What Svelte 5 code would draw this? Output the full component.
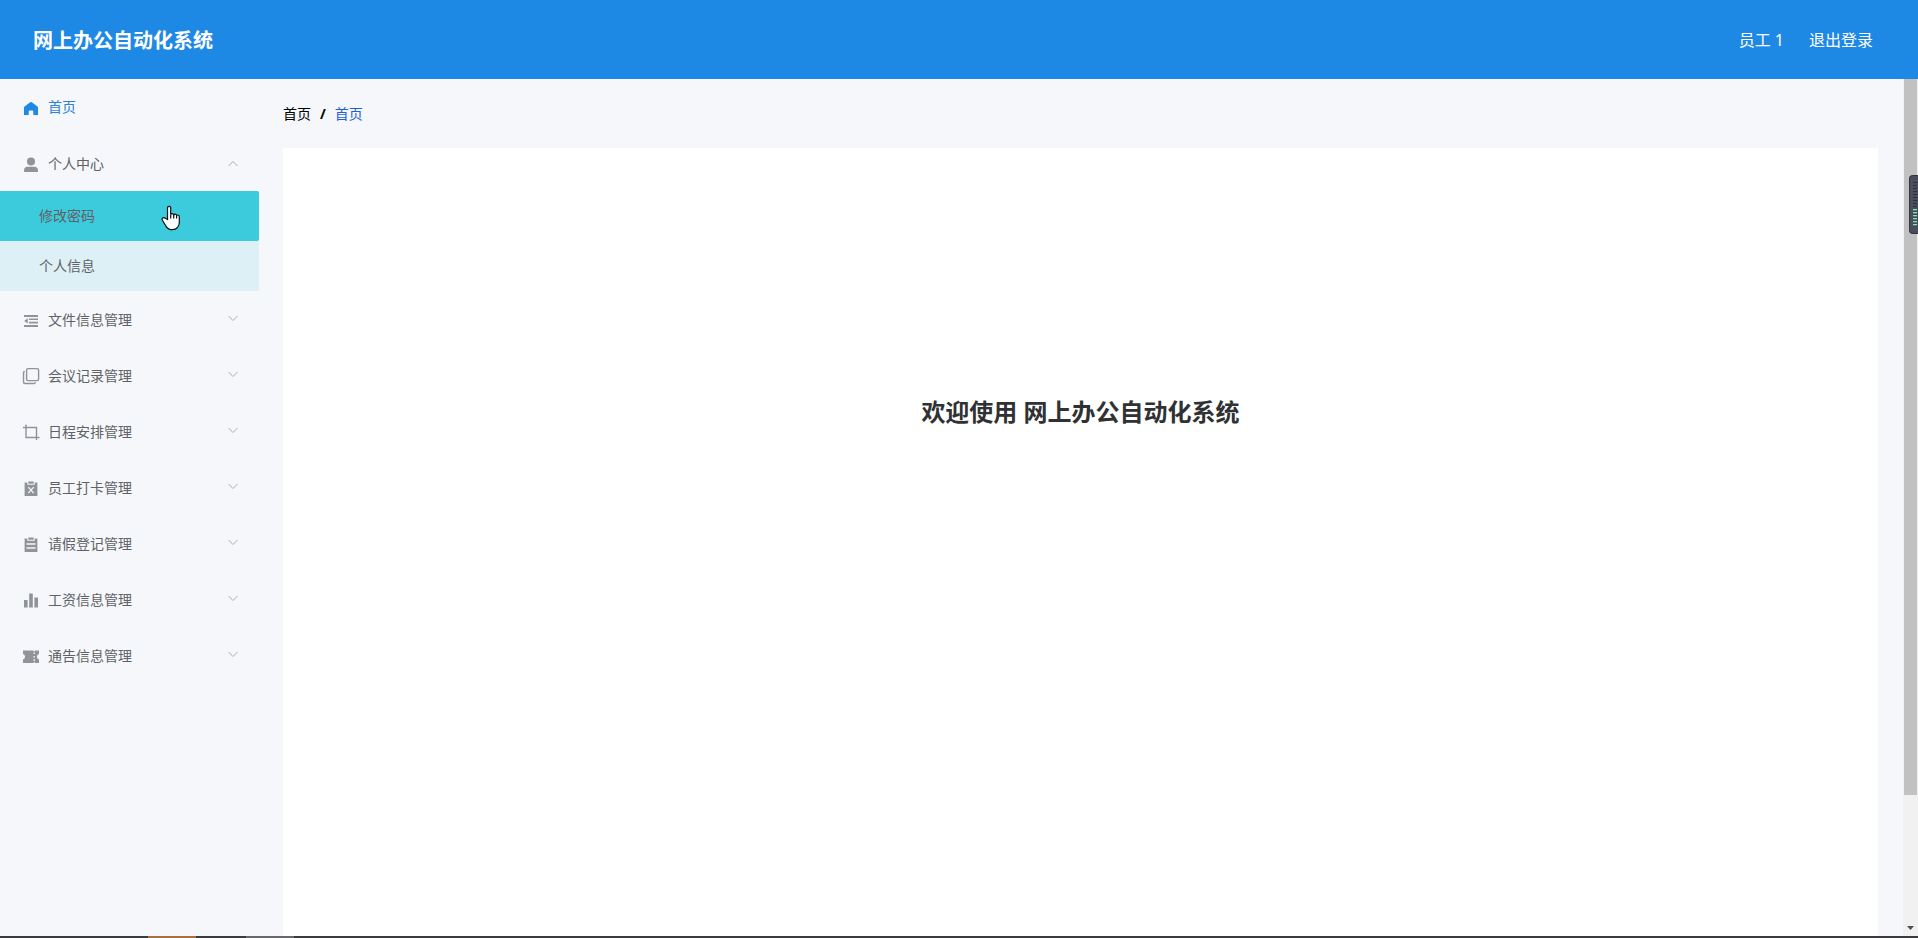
<script>
  const systemName = '网上办公自动化系统';

  let menus = $state([
    {
      name: '个人中心',
      icon: 'user',
      open: true,
      children: ['修改密码', '个人信息']
    },
    { name: '文件信息管理', icon: 'fold', open: false, children: ['文件信息'] },
    { name: '会议记录管理', icon: 'copy', open: false, children: ['会议记录'] },
    { name: '日程安排管理', icon: 'crop', open: false, children: ['日程安排'] },
    { name: '员工打卡管理', icon: 'claim', open: false, children: ['员工打卡'] },
    { name: '请假登记管理', icon: 'order', open: false, children: ['请假登记'] },
    { name: '工资信息管理', icon: 'data', open: false, children: ['工资信息'] },
    { name: '通告信息管理', icon: 'ticket', open: false, children: ['通告信息'] }
  ]);

  let hovered = $state('修改密码');
</script>

{#snippet icon(type)}
  <svg class="icon" viewBox="0 0 18 18" width="18" height="18" aria-hidden="true">
    {#if type === 'home'}
      <path d="M8.2 4.3a1.3 1.3 0 0 1 1.6 0l5.6 4.2q.6.5.6 1.2V17h-4.7v-3.4a1 1 0 0 0-1-1H7.7a1 1 0 0 0-1 1V17H2V9.700q0-.7.6-1.200z" />
    {:else if type === 'user'}
      <circle cx="9" cy="6.500" r="4" />
      <path d="M4.500 11.800h9q2.500.8 2.500 3.400v1q0 .9-.9.900H2.900q-.9 0-.9-.9v-1q0-2.600 2.500-3.400z" />
    {:else if type === 'fold'}
      <path d="M2 4h14v2H2zM7 7.400h9v1.700H7zM7 10.700h9v1.700H7zM2 14h14v2H2zM5.800 7.300v5.200L2.200 9.900z" />
    {:else if type === 'copy'}
      <g class="line">
        <rect x="4.600" y="1.600" width="12" height="12" rx="1.500" />
        <path d="M2.800 4.500q-1.300 0-1.300 1.300v9.200q0 1.500 1.500 1.500h9q1.300 0 1.300-1.300" />
      </g>
    {:else if type === 'crop'}
      <path class="line" d="M4 1.500V14.500h13.500M1 4.500h13.500v12.500" />
    {:else if type === 'claim'}
      <path d="M6.300 2.500h5.400v2.200H6.300z" />
      <path d="M2.600 3.500h2.700v2.200h7.400V3.500h2.700V17H2.600z" />
      <path class="mark" d="M6.300 8.100l5.400 6M11.700 8.100l-5.400 6" />
    {:else if type === 'order'}
      <path d="M6.300 2.500h5.400v2.200H6.300z" />
      <path d="M2.600 3.500h2.700v2.200h7.400V3.500h2.700V17H2.600z" />
      <path class="mark" d="M4.500 9h9M4.500 13h9" />
    {:else if type === 'data'}
      <path d="M2 9h3.600v7.500H2zM7.200 2.500h3.600v14H7.200zM12.400 6.500H16v10h-3.600z" />
    {:else if type === 'ticket'}
      <path d="M1 3.500h10.300l.9 1.200.9-1.200H17v3.400a3 3 0 0 0 0 5.700V16h-3.900l-.9-1.200-.9 1.200H1v-3.400a3 3 0 0 0 0-5.700z" />
      <path class="mark" d="M12.200 5.500v1.600M12.200 8.900v1.600M12.200 12.300v1.600" />
    {/if}
  </svg>
{/snippet}

<div class="app">
  <header>
    <h1>{systemName}</h1>
    <div class="account">
      <span>员工 1</span>
      <button type="button">退出登录</button>
    </div>
  </header>

  <div class="body">
    <nav>
      <a class="item home" href="#home">
        {@render icon('home')}
        <span>首页</span>
      </a>
      {#each menus as menu}
        <button
          type="button"
          class="item group"
          aria-expanded={menu.open}
          onclick={() => (menu.open = !menu.open)}
        >
          {@render icon(menu.icon)}
          <span>{menu.name}</span>
          <svg class="arrow" class:up={menu.open} viewBox="0 0 12 12" width="12" height="12" aria-hidden="true">
            <path d="M1.500 3l4.500 4.500L10.500 3" />
          </svg>
        </button>
        {#if menu.open}
          <ul>
            {#each menu.children as child}
              <li>
                <a
                  href="#{child}"
                  class:hovered={hovered === child}
                  onmouseenter={() => (hovered = child)}
                >
                  {child}
                </a>
              </li>
            {/each}
          </ul>
        {/if}
      {/each}
    </nav>

    <main>
      <div class="breadcrumb">
        <span>首页</span>
        <b>/</b>
        <a href="#home">首页</a>
      </div>
      <section>
        <h2>欢迎使用 {systemName}</h2>
      </section>
    </main>

    <div class="scrollbar" aria-hidden="true">
      <div class="thumb"></div>
      <svg viewBox="0 0 15 17" width="15" height="17">
        <path d="M4 7h7l-3.500 4z" />
      </svg>
    </div>
  </div>

  <div class="taskbar">
    <i class="orange"></i>
    <i class="grey"></i>
  </div>

  <!-- volume meter at the edge of the screen -->
  <div class="meter">
    <div class="level off"></div>
    <div class="level on"></div>
  </div>

  <!-- mouse pointer -->
  <svg class="pointer" viewBox="0 0 20 26" width="20" height="26" aria-hidden="true">
    <path d="M6.500 14.500V3q0-1.700 1.600-1.700T9.700 3v6.500q.3-.9 1.500-.9 1.400 0 1.500 1.300.4-.7 1.400-.7 1.300 0 1.500 1.300.4-.5 1.200-.5 1.500 0 1.500 1.800v5.400q0 3.300-1.800 5.100-1.600 2.400-5.100 2.400-4.200 0-6.100-3.100L1.500 15.500q-1-1.800.4-2.600 1.300-.7 2.600.4z" />
    <path d="M9.700 9.500v4M12.700 10v3.500M15.600 10.500v3" />
  </svg>
</div>

<style>
  :global(body) {
    margin: 0;
  }

  .app {
    position: relative;
    display: flex;
    flex-direction: column;
    height: 100vh;
    overflow: hidden;
    background: #f5f7fb;
    color: #606266;
    font-family: 'Noto Sans', 'Noto Sans CJK SC', sans-serif;
    font-size: 14px;
    line-height: 20px;
  }

  a {
    color: inherit;
    text-decoration: none;
  }

  button {
    padding: 0;
    border: none;
    background: none;
    color: inherit;
    font: inherit;
    cursor: pointer;
  }

  header {
    display: flex;
    align-items: center;
    justify-content: space-between;
    height: 79px;
    padding: 0 45px 0 33px;
    box-sizing: border-box;
    background: #1e88e5;
    color: #fff;
  }

  h1 {
    margin: 0;
    padding-top: 2px;
    font-size: 20px;
    font-weight: 700;
  }

  .account {
    display: flex;
    gap: 25px;
    font-size: 16px;
  }

  .body {
    display: flex;
    flex: 1;
    min-height: 0;
  }

  nav {
    flex: none;
    width: 259px;
  }

  .item {
    display: flex;
    align-items: center;
    gap: 8px;
    width: 100%;
    height: 56px;
    padding: 0 20px 0 22px;
    box-sizing: border-box;
  }

  .group {
    padding-top: 2px;
  }

  .home {
    color: #2d82dc;
  }

  .icon {
    fill: #909399;
  }

  .home .icon {
    fill: #1e88e5;
  }

  .line {
    fill: none;
    stroke: #909399;
    stroke-width: 1.4;
  }

  .mark {
    fill: none;
    stroke: #f5f7fb;
    stroke-width: 1.3;
  }

  .arrow {
    margin-bottom: 2px;
    margin-left: auto;
    fill: none;
    stroke: #a9acb2;
  }

  .arrow.up {
    transform: rotate(180deg);
  }

  ul {
    margin: 0;
    padding: 0;
    list-style: none;
    background: #ddf0f6;
  }

  li a {
    display: block;
    padding: 15px 39px;
    border-radius: 0 2px 2px 0;
  }

  li a.hovered {
    background: #3ccbdd;
  }

  main {
    display: flex;
    flex: 1;
    flex-direction: column;
    padding: 0 25px 0 24px;
  }

  .breadcrumb {
    display: flex;
    gap: 9px;
    padding: 25px 0 24px;
    color: #000;
  }

  .breadcrumb a {
    color: #1f5fd6;
  }

  section {
    flex: 1;
    background: #fff;
    text-align: center;
  }

  h2 {
    margin: 248px 0 0;
    color: #303133;
    font-size: 24px;
    font-weight: 700;
    line-height: 32px;
  }

  .scrollbar {
    display: flex;
    flex-direction: column;
    justify-content: space-between;
    width: 15px;
    background: #f1f1f1;
  }

  .thumb {
    height: 83.5%;
    margin: 0 1px;
    background: #c1c1c1;
  }

  .scrollbar svg {
    fill: #505050;
  }

  .taskbar {
    display: flex;
    gap: 50px;
    height: 2px;
    padding-left: 148px;
    background: #3b3a3e;
  }

  .taskbar i {
    width: 48px;
  }

  .orange {
    background: #a8703f;
  }

  .grey {
    background: #68676b;
  }

  .meter {
    position: absolute;
    top: 175px;
    right: 0;
    display: flex;
    flex-direction: column;
    width: 9px;
    height: 59px;
    padding: 6px 1px 6px 3px;
    box-sizing: border-box;
    border: 1px solid #33353f;
    border-right: none;
    border-radius: 4px 0 0 4px;
    background: #4a4d5b;
  }

  .level.off {
    height: 28px;
    background: repeating-linear-gradient(#2f313c 0 1px, #4a4d5b 1px 3px);
  }

  .level.on {
    height: 18px;
    background: repeating-linear-gradient(#8fe0b4 0 1px, #4f8073 1px 2px, #3e4a50 2px 3px);
  }

  .pointer {
    position: absolute;
    top: 205px;
    left: 161px;
    fill: #fff;
    stroke: #111;
    stroke-width: 1.2;
  }
</style>
